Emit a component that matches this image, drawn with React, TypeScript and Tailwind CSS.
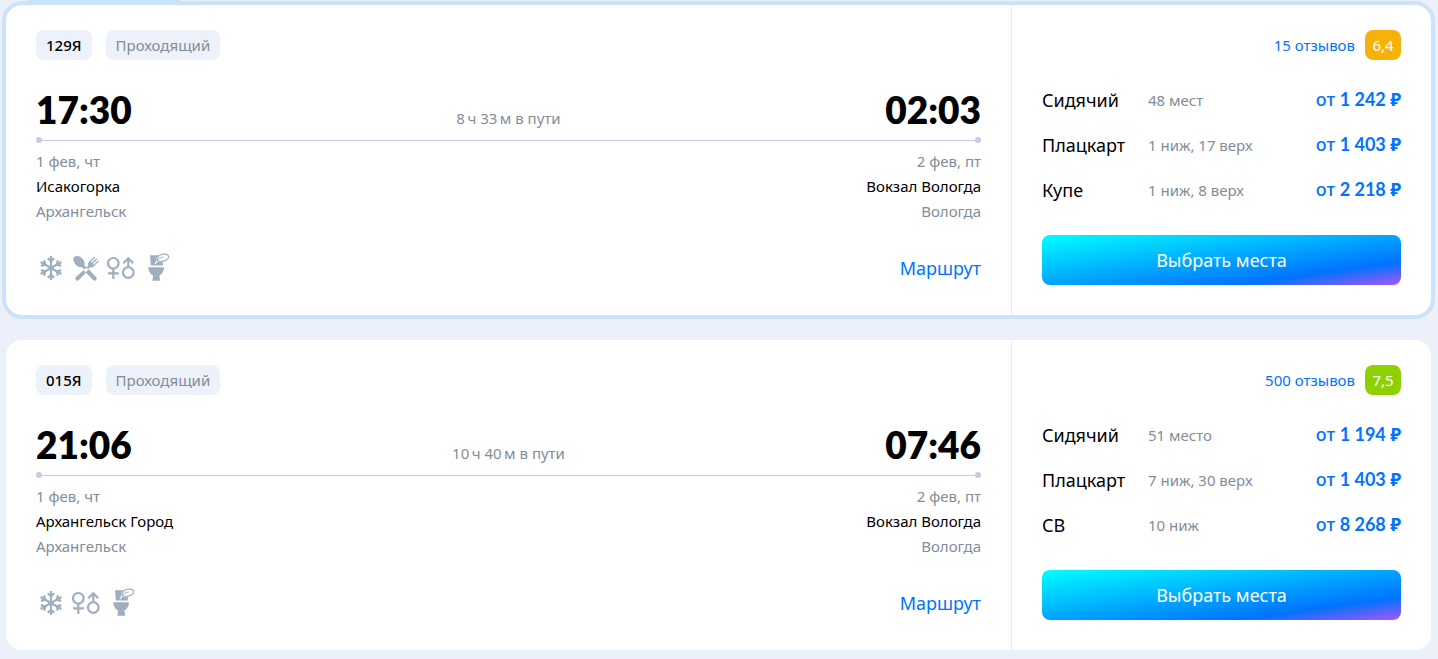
import React from "react";

type Amenity = "climate" | "food" | "gender" | "toilet";

interface Seat {
  name: string;
  places: string;
  price: string;
}

interface Train {
  number: string;
  departure: string;
  arrival: string;
  duration: string;
  from: { date: string; station: string; city: string };
  to: { date: string; station: string; city: string };
  amenities: Amenity[];
  reviews: string;
  rating: string;
  ratingColor: string;
  seats: Seat[];
  highlighted?: boolean;
}

const TRAINS: Train[] = [
  {
    number: "129Я",
    departure: "17:30",
    arrival: "02:03",
    duration: "8\u2009ч 33\u2009м в пути",
    from: { date: "1 фев, чт", station: "Исакогорка", city: "Архангельск" },
    to: { date: "2 фев, пт", station: "Вокзал Вологда", city: "Вологда" },
    amenities: ["climate", "food", "gender", "toilet"],
    reviews: "15 отзывов",
    rating: "6,4",
    ratingColor: "bg-[#f6b20b]",
    seats: [
      { name: "Сидячий", places: "48 мест", price: "1 242" },
      { name: "Плацкарт", places: "1 ниж, 17 верх", price: "1 403" },
      { name: "Купе", places: "1 ниж, 8 верх", price: "2 218" },
    ],
    highlighted: true,
  },
  {
    number: "015Я",
    departure: "21:06",
    arrival: "07:46",
    duration: "10\u2009ч 40\u2009м в пути",
    from: {
      date: "1 фев, чт",
      station: "Архангельск Город",
      city: "Архангельск",
    },
    to: { date: "2 фев, пт", station: "Вокзал Вологда", city: "Вологда" },
    amenities: ["climate", "gender", "toilet"],
    reviews: "500 отзывов",
    rating: "7,5",
    ratingColor: "bg-[#8fd000]",
    seats: [
      { name: "Сидячий", places: "51 место", price: "1 194" },
      { name: "Плацкарт", places: "7 ниж, 30 верх", price: "1 403" },
      { name: "СВ", places: "10 ниж", price: "8 268" },
    ],
  },
];

const ICONS: Record<Amenity, React.ReactNode> = {
  climate: (
    <g fill="none" stroke="currentColor" strokeWidth="2.2">
      {[0, 60, 120, 180, 240, 300].map((deg) => (
        <path
          key={deg}
          transform={`rotate(${deg} 15 15)`}
          d="M15 15V3M11.8 5.200 15 8.300l3.200-3.100"
        />
      ))}
    </g>
  ),
  food: (
    <g fill="currentColor">
      <path d="M3.2 4C5.5 2 9.500 3.200 11.700 5.800c1.700 2 2.200 4.200 1.600 6.300l2.200 2.300-2.200 2.100-2.300-2.300c-2 .3-4.200-.4-5.900-2.200C2.500 9.300 1.300 5.800 3.200 4z" />
      <path d="m17.600 16.300 7.500 7.600a2.100 2.100 0 0 1-3 3l-7.500-7.500z" />
      <path d="m4.900 24 7.600-6.800 2.500 2.600-7.100 7.300a2.100 2.100 0 0 1-3-3.100z" />
      <path d="m15 14.900 2.300-2.400c-.5-1.600-.1-2.800 1-3.900l5.100-5.200.9.900-4.500 4.700.8.800 4.800-4.600.9.900-4.600 4.800.8.800 4.700-4.500.9.900-5.200 5.100c-1.200 1.200-2.500 1.500-4 1l-1.700 1.700z" />
    </g>
  ),
  gender: (
    <g fill="none" stroke="currentColor" strokeWidth="2.2">
      <circle cx="7.300" cy="10.300" r="5.300" />
      <path d="M7.300 15.800V26M2 20.300h10.800" />
      <circle cx="22.300" cy="19.500" r="5.300" />
      <path d="M22.300 14V5.500M17.300 10.300l5-5 5 5" />
    </g>
  ),
  toilet: (
    <>
      <path
        fill="currentColor"
        d="M9 2.300h12.500l.5 10.300H9.800zM7 14.200h16c0 4.200-1.900 6.700-4.600 8.200l.8 5.400h-7.800l.7-5.400C9.300 20.900 7.300 18.400 7 14.200z"
      />
      <path
        fill="#fff"
        stroke="#fff"
        strokeWidth="1.600"
        d="M16.300 7.800C15 3.500 19.500.9 24 1.200c5 .5 4.500 3.900 1.200 5.800-2.700 1.500-5.800 2-8.900.8z"
      />
      <path
        fill="none"
        stroke="currentColor"
        strokeWidth="1.200"
        d="M16.300 7.800C15 3.500 19.500.9 24 1.200c5 .5 4.500 3.900 1.200 5.800-2.700 1.500-5.800 2-8.900.8z"
      />
      <path
        fill="none"
        stroke="#fff"
        strokeWidth="1.200"
        d="M16.300 7.800 14 11"
      />
      <path
        fill="none"
        stroke="currentColor"
        strokeWidth="1"
        d="M22.500 4c-3 .3-4.700 1.500-6.200 3.800"
      />
    </>
  ),
};

const ICON_LABELS: Record<Amenity, string> = {
  climate: "Кондиционер",
  food: "Питание",
  gender: "Мужские и женские места",
  toilet: "Биотуалет",
};

function AmenityIcon({ type }: { type: Amenity }) {
  return (
    <svg
      viewBox="0 0 30 30"
      className="w-[30px] h-[30px] text-[#a0aec2]"
      role="img"
      aria-label={ICON_LABELS[type]}
    >
      {ICONS[type]}
    </svg>
  );
}

function TrainCard({ train }: { train: Train }) {
  return (
    <article
      className={`flex bg-white rounded-2xl ${
        train.highlighted ? "ring-4 ring-[#cbe2fb]" : ""
      }`}
    >
      {/* Route */}
      <div className="flex-1 flex flex-col px-[30px] pt-[25px] pb-8">
        <div className="flex gap-[14px] leading-[30px]">
          <span className="px-[10px] rounded-lg bg-[#ecf1fa] font-medium text-black">
            {train.number}
          </span>
          <span className="px-[10px] rounded-lg bg-[#ecf1fa] text-[#838c9b]">
            Проходящий
          </span>
        </div>

        <div className="flex items-baseline justify-between mt-[30px]">
          <time className="font-['Lato'] font-extrabold text-[37px] leading-[40px]">
            {train.departure}
          </time>
          <span className="text-[#838c9b]">{train.duration}</span>
          <time className="font-['Lato'] font-extrabold text-[37px] leading-[40px]">
            {train.arrival}
          </time>
        </div>

        <div className="flex items-center mt-[7px] h-[6px]">
          <span className="size-[6px] rounded-full bg-[#c2cee0]" />
          <span className="flex-1 h-px bg-[#c2cee0]" />
          <span className="size-[6px] rounded-full bg-[#c2cee0]" />
        </div>

        <div className="flex justify-between mt-[6px] leading-[25px] text-[#838c9b]">
          <div>
            <p>{train.from.date}</p>
            <p className="text-black">{train.from.station}</p>
            <p>{train.from.city}</p>
          </div>
          <div className="text-right">
            <p>{train.to.date}</p>
            <p className="text-black">{train.to.station}</p>
            <p>{train.to.city}</p>
          </div>
        </div>

        <div className="flex items-center justify-between mt-auto">
          <div className="flex gap-[5px]">
            {train.amenities.map((a) => (
              <AmenityIcon key={a} type={a} />
            ))}
          </div>
          <a
            href="#route"
            className="text-[18px] leading-[30px] font-[380] text-[#0073ff]"
          >
            Маршрут
          </a>
        </div>
      </div>

      {/* Prices */}
      <div className="w-[420px] shrink-0 border-l border-[#e6eaf2] px-[30px] pt-[25px] pb-[30px]">
        <div className="flex justify-end gap-[10px] leading-[30px]">
          <a href="#reviews" className="text-[#0073ff]">
            {train.reviews}
          </a>
          <span
            className={`w-[36px] rounded-lg text-center text-white ${train.ratingColor}`}
          >
            {train.rating}
          </span>
        </div>

        <table className="w-full mt-[18px]">
          <tbody>
            {train.seats.map((seat) => (
              <tr key={seat.name} className="h-[45px]">
                <th
                  scope="row"
                  className="w-[106px] p-0 text-left font-[380] text-[18px] text-black"
                >
                  {seat.name}
                </th>
                <td className="p-0 text-[#838c9b]">{seat.places}</td>
                <td className="p-0 pb-[2px] text-right text-[18px] font-medium text-[#0073ff] whitespace-nowrap">
                  от{" "}
                  <span className="font-['Lato','Noto_Sans',sans-serif] font-bold">
                    {seat.price} ₽
                  </span>
                </td>
              </tr>
            ))}
          </tbody>
        </table>

        <button
          type="button"
          className="w-full h-[50px] mt-[22px] rounded-lg text-[18px] font-[380] text-white bg-[linear-gradient(to_bottom_right,#00ffff_0%,#0073ff_77%,#a855ff_100%)] cursor-pointer"
        >
          Выбрать места
        </button>
      </div>
    </article>
  );
}

export default function App() {
  return (
    <main className="min-h-screen bg-[#ecf0fa] pb-2 font-['Noto_Sans',sans-serif] text-[15px]">
      <div className="ml-[26px] w-[154px] h-px bg-[#cbe2fb]" />
      <div className="flex flex-col gap-[25px] pt-1 pl-[6px] pr-[7px]">
        {TRAINS.map((train) => (
          <TrainCard key={train.number} train={train} />
        ))}
      </div>
    </main>
  );
}
